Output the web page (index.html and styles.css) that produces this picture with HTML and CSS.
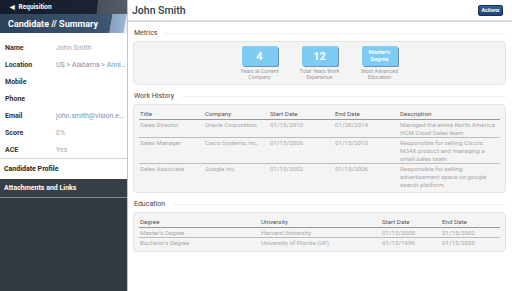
FILE: index.html
```html
<!DOCTYPE html>
<html lang="en">

<head>
    <meta charset="UTF-8">
    <meta name="viewport" content="width=device-width, initial-scale=1.0">
    <title>Candidate Summary</title>
    <link rel="stylesheet" href="styles.css">
</head>

<body>
    <aside class="side">
        <div class="side-top"><span class="back">&#9664;</span> Requisition</div>
        <div class="side-title">Candidate // Summary</div>
        <div class="fields">
            <div class="field"><span class="lbl">Name</span><span class="val">John Smith</span></div>
            <div class="field"><span class="lbl">Location</span><span class="val link">US &gt; Alabama &gt; Anniston</span></div>
            <div class="field"><span class="lbl">Mobile</span><span class="val"></span></div>
            <div class="field"><span class="lbl">Phone</span><span class="val"></span></div>
            <div class="field"><span class="lbl">Email</span><span class="val link">john.smith@vision.example.com</span></div>
            <div class="field"><span class="lbl">Score</span><span class="val">0%</span></div>
            <div class="field"><span class="lbl">ACE</span><span class="val">Yes</span></div>
        </div>
        <div class="nav-item">Candidate Profile</div>
        <div class="nav-item dark">Attachments and Links</div>
        <div class="side-fill"></div>
    </aside>

    <main class="main">
        <header class="topbar">
            <h1 class="name">John Smith</h1>
            <button class="actions">Actions</button>
        </header>

        <section class="sec first">
            <div class="sec-head"><span>Metrics</span></div>
            <div class="panel metrics">
                <div class="metric">
                    <div class="tile">4</div>
                    <div class="m-lbl">Years at Current Company</div>
                </div>
                <div class="metric">
                    <div class="tile">12</div>
                    <div class="m-lbl">Total Years Work Experience</div>
                </div>
                <div class="metric">
                    <div class="tile small">Master's Degree</div>
                    <div class="m-lbl">Most Advanced Education</div>
                </div>
            </div>
        </section>

        <section class="sec">
            <div class="sec-head"><span>Work History</span></div>
            <div class="panel">
                <table class="grid work">
                    <thead>
                        <tr><th>Title</th><th>Company</th><th>Start Date</th><th>End Date</th><th>Description</th></tr>
                    </thead>
                    <tbody>
                        <tr>
                            <td>Sales Director</td><td>Oracle Corporation</td><td>01/15/2010</td><td>01/28/2014</td>
                            <td>Managed the entire North America HCM Cloud Sales team.</td>
                        </tr>
                        <tr>
                            <td>Sales Manager</td><td>Cisco Systems, Inc.</td><td>01/15/2006</td><td>01/15/2010</td>
                            <td>Responsible for selling Cisco's M34X product and managing a small sales team.</td>
                        </tr>
                        <tr>
                            <td>Sales Associate</td><td>Google Inc.</td><td>01/15/2002</td><td>01/15/2006</td>
                            <td>Responsible for selling advertisement space on google search platform.</td>
                        </tr>
                    </tbody>
                </table>
            </div>
        </section>

        <section class="sec">
            <div class="sec-head"><span>Education</span></div>
            <div class="panel edu-panel">
                <table class="grid edu">
                    <thead>
                        <tr><th>Degree</th><th>University</th><th>Start Date</th><th>End Date</th></tr>
                    </thead>
                    <tbody>
                        <tr><td>Master's Degree</td><td>Harvard University</td><td>01/15/2000</td><td>01/15/2002</td></tr>
                        <tr><td>Bachelor's Degree</td><td>University of Florida (UF)</td><td>01/15/1996</td><td>01/15/2000</td></tr>
                    </tbody>
                </table>
            </div>
        </section>
    </main>
</body>

</html>
```

FILE: styles.css
```css
body {
    font-family: 'Roboto', 'Liberation Sans', sans-serif;
    margin: 0;
    padding: 0;
    display: flex;
    height: 291px;
    overflow: hidden;
    background-color: #fff;
    color: #444;
}

/* left column */

.side {
    width: 127px;
    flex: none;
    display: flex;
    flex-direction: column;
    border-right: 1px solid #c4c4c4;
    background-color: #fff;
}

.side-top {
    height: 14px;
    line-height: 14px;
    padding-left: 10px;
    font-size: 6.5px;
    font-weight: bold;
    color: #fff;
    background: linear-gradient(97deg, #151d2a 0, #1a2332 76%, #4a515a 76.5%, #565d66 100%);
}

.back {
    font-size: 6px;
    margin-right: 2px;
}

.side-title {
    height: 19px;
    line-height: 20px;
    padding-left: 8px;
    font-size: 9px;
    font-weight: bold;
    color: #fff;
    background: linear-gradient(100deg, #2d4259 0, #3e5671 86%, #88a2c3 86.5%, #9bb3d0 97%, #e9eef3 97.5%);
}

.fields {
    padding-top: 6px;
}

.field {
    display: flex;
    height: 17px;
    align-items: center;
    font-size: 7px;
}

.lbl {
    width: 51px;
    padding-left: 5px;
    flex: none;
    font-weight: bold;
    color: #333;
}

.val {
    width: 70px;
    color: #a9a9a9;
    white-space: nowrap;
    overflow: hidden;
    text-overflow: ellipsis;
}

.val.link {
    color: #7694b4;
}

.nav-item {
    height: 20px;
    line-height: 20px;
    padding-left: 4px;
    font-size: 7px;
    font-weight: bold;
    color: #222;
    border-top: 1px solid #cfcfcf;
}

.nav-item.dark {
    height: 18px;
    line-height: 18px;
    color: #fff;
    background-color: #373e45;
    border-top: none;
    border-bottom: 1px solid #80868c;
}

.side-fill {
    flex: 1;
    background-color: #323940;
}

/* main area */

.main {
    flex: 1;
    min-width: 0;
    padding: 0 6px 0 5px;
}

.topbar {
    display: flex;
    justify-content: space-between;
    align-items: center;
    height: 20px;
    margin: 0 -6px 0 -5px;
    padding: 0 9px 0 4px;
    border-bottom: 2px solid #d9d9d9;
}

.name {
    margin: 0;
    font-size: 10.5px;
    font-weight: 500;
    color: #2c3e52;
}

.actions {
    height: 11px;
    width: 25px;
    padding: 0;
    font-family: inherit;
    font-size: 5.3px;
    font-weight: bold;
    color: #fff;
    background: linear-gradient(#35609a, #1f426f);
    border: 1px solid #17325a;
    border-radius: 2px;
}

.sec {
    margin-top: 6px;
}

.sec.first {
    margin-top: 6px;
}

.sec-head {
    display: flex;
    align-items: center;
    height: 10px;
    margin-bottom: 3px;
    font-size: 7px;
    color: #444;
}

.sec-head::after {
    content: '';
    flex: 1;
    height: 1px;
    margin-left: 8px;
    background-color: #efefef;
}

.sec-head span {
    padding-left: 1px;
}

.panel {
    background-color: #f4f4f4;
    border: 1px solid #e4e4e4;
    border-radius: 4px;
    padding: 5px 5px 3px;
}

.metrics {
    display: flex;
    justify-content: center;
    padding: 4px 5px 4px;
}

.metric {
    width: 60px;
    display: flex;
    flex-direction: column;
    align-items: center;
}

.tile {
    width: 36px;
    height: 20px;
    display: flex;
    align-items: center;
    justify-content: center;
    text-align: center;
    font-size: 11px;
    font-weight: bold;
    color: #fff;
    background-color: #7ecbf4;
    border-radius: 2px;
    box-shadow: 1px 1px 0 #6e94ad;
}

.tile.small {
    font-size: 5.6px;
    line-height: 7px;
}

.m-lbl {
    margin-top: 2px;
    width: 50px;
    text-align: center;
    font-size: 5.3px;
    line-height: 6px;
    color: #9a9a9a;
}

.grid {
    width: 100%;
    border-collapse: collapse;
    font-size: 6.2px;
    line-height: 8px;
    table-layout: fixed;
}

.grid th {
    text-align: left;
    font-weight: normal;
    color: #555;
    padding: 0 1px 1px;
    border-bottom: 1px solid #9a9a9a;
}

.grid td {
    vertical-align: top;
    color: #a9a9a9;
    padding: 1px 1px 0;
    border-bottom: 1px solid #bdbdbd;
}

.grid tbody tr:last-child td {
    border-bottom: none;
}

.work th:nth-child(-n+4) {
    width: 63px;
}

.edu th:nth-child(1) {
    width: 119px;
}

.edu th:nth-child(2) {
    width: 119px;
}

.edu th:nth-child(3) {
    width: 58px;
}

.edu-panel {
    padding-bottom: 4px;
}
```
